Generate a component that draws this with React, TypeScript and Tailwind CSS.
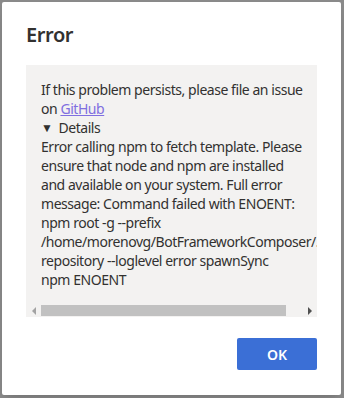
import React from "react";

const lines = [
  "Error calling npm to fetch template. Please",
  "ensure that node and npm are installed",
  "and available on your system. Full error",
  "message: Command failed with ENOENT:",
  "npm root -g --prefix",
  "/home/morenovg/BotFrameworkComposer/.;",
  "repository --loglevel error spawnSync",
  "npm ENOENT",
];

export default function App() {
  return (
    <div className="w-[344px] h-[398px] bg-[#8a8a8a] p-[2px] pb-[3px] pr-[3px] font-['Noto_Sans',sans-serif] text-[#323130]">
      {/* Dialog */}
      <div className="w-full h-full bg-white rounded-[2px] flex flex-col px-6 pt-[19px] shadow-lg">
        <h1 className="text-[20px] leading-[28px] font-semibold tracking-[-0.4px]">Error</h1>

        {/* Error details box */}
        <div className="mt-[16px] bg-[#f3f2f1] flex flex-col">
          <div className="overflow-hidden pl-[15px] pt-[15px] text-[14px] leading-[19px] tracking-[-0.45px]">
            <p>If this problem persists, please file an issue</p>
            <p>
              on <span className="text-[#7f6fe0] underline">GitHub</span>
            </p>
            <div className="flex items-center gap-[6px]">
              <span className="text-[12px] leading-none">▼</span>
              <span>Details</span>
            </div>
            {lines.map((l) => (
              <p key={l} className="whitespace-nowrap">
                {l}
              </p>
            ))}
          </div>

          {/* fake horizontal scrollbar */}
          <div className="mt-[16px] h-[11px] flex items-center">
            <div className="w-[15px] flex justify-center">
              <div className="w-0 h-0 border-y-[4px] border-y-transparent border-r-[4px] border-r-[#a3a3a3]" />
            </div>
            <div className="flex-1 h-full">
              <div className="w-[245px] h-full bg-[#c1c1c1]" />
            </div>
            <div className="w-[15px] flex justify-center">
              <div className="w-0 h-0 border-y-[4px] border-y-transparent border-l-[4px] border-l-[#505050]" />
            </div>
          </div>
          <div className="h-[1px]" />
        </div>

        {/* Footer */}
        <div className="flex justify-end mt-[21px]">
          <button className="w-[80px] h-[32px] rounded-[2px] bg-[#3b6fd6] text-white text-[14px] font-semibold">
            OK
          </button>
        </div>
      </div>
    </div>
  );
}
